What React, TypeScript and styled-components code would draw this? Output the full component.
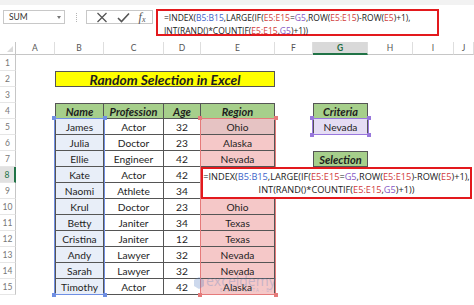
import React from "react";
import styled, { createGlobalStyle } from "styled-components";

const GlobalStyle = createGlobalStyle`
  body {
    margin: 0;
    background: #ffffff;
    font-family: "Lato", "Liberation Sans", sans-serif;
  }
`;

type Row = { name: string; job: string; age: number; region: string };

const rows: Row[] = [
  { name: "James", job: "Actor", age: 32, region: "Ohio" },
  { name: "Julia", job: "Doctor", age: 23, region: "Alaska" },
  { name: "Ellie", job: "Engineer", age: 42, region: "Nevada" },
  { name: "Kate", job: "Actor", age: 42, region: "" },
  { name: "Naomi", job: "Athlete", age: 34, region: "" },
  { name: "Krul", job: "Doctor", age: 23, region: "Ohio" },
  { name: "Betty", job: "Janiter", age: 34, region: "Texas" },
  { name: "Cristina", job: "Janiter", age: 12, region: "Texas" },
  { name: "Andy", job: "Lawyer", age: 32, region: "Nevada" },
  { name: "Sarah", job: "Lawyer", age: 32, region: "Nevada" },
  { name: "Timothy", job: "Actor", age: 42, region: "Alaska" },
];

const letters = ["A", "B", "C", "D", "E", "F", "G", "H", "I", "J"];

const BLUE = "#3d63c9";
const RED = "#d03c3c";
const PURPLE = "#8557c4";

type Tok = [string, string?];
const line1: Tok[] = [
  ["=INDEX("], ["B5:B15", BLUE], [",LARGE(IF("], ["E5:E15", RED], ["="], ["G5", PURPLE],
  [",ROW("], ["E5:E15", RED], [")-ROW("], ["E5", RED], [")+1),"],
];
const line2: Tok[] = [
  ["INT(RAND()*COUNTIF("], ["E5:E15", RED], [","], ["G5", PURPLE], [")+1))"],
];

const Page = styled.div`
  width: 474px;
  height: 305px;
  overflow: hidden;
  display: flex;
  flex-direction: column;
  position: relative;
`;

/* ---------- formula bar ---------- */

const FormulaBar = styled.div`
  display: flex;
  align-items: flex-start;
  border-top: 5px solid #f2f2f2;
  padding: 4px 0 0 3px;
  box-sizing: border-box;
  height: 42px;
`;

const NameBox = styled.div`
  width: 62px;
  height: 14px;
  margin-top: 1px;
  border: 1px solid #c8c8c8;
  box-sizing: border-box;
  display: flex;
  align-items: center;
  justify-content: space-between;
  padding: 0 3px 0 5px;
  font-size: 8.5px;
  color: #333;
`;

const Arrow = styled.span`
  width: 0;
  height: 0;
  border-left: 2.5px solid transparent;
  border-right: 2.5px solid transparent;
  border-top: 3px solid #777;
`;

const Dots = styled.div`
  width: 1px;
  height: 9px;
  margin: 4px 8px 0 11px;
  border-left: 1px dotted #b5b5b5;
`;

const FxBox = styled.div`
  width: 67px;
  height: 14px;
  margin-top: 1px;
  border: 1px solid #c8c8c8;
  box-sizing: border-box;
  display: flex;
  align-items: center;
  justify-content: space-around;
  padding: 0 2px 0 4px;
`;

const Fx = styled.span`
  font-family: "Liberation Serif", serif;
  font-style: italic;
  font-size: 12px;
  color: #555;
  line-height: 1;
  sub {
    font-size: 8px;
    vertical-align: -1px;
  }
`;

const FormulaInput = styled.div`
  margin-left: 3px;
  width: 283px;
  height: 27px;
  border: 2px solid #e3191d;
  box-sizing: border-box;
  padding: 1px 0 0 6px;
  font-family: "Open Sans", sans-serif;
  font-size: 8.5px;
  line-height: 12.5px;
  color: #222;
  white-space: nowrap;
`;

/* ---------- sheet ---------- */

const Sheet = styled.div`
  display: grid;
  grid-template-columns: 16px 39px 49px 60px 37px 74px 38px 55px 45px 41px 1fr;
  grid-template-rows: 13px repeat(15, 16px) 1fr;
  flex: 1;
`;

const Corner = styled.div`
  grid-column: 1;
  grid-row: 1;
  border-right: 1px solid #c6c6c6;
  border-bottom: 1px solid #c6c6c6;
  position: relative;
  &::after {
    content: "";
    position: absolute;
    right: 2px;
    bottom: 2px;
    border-left: 6px solid transparent;
    border-bottom: 6px solid #dadada;
  }
`;

const ColHead = styled.div<{ $col: number; $active?: boolean }>`
  grid-column: ${(p) => p.$col};
  grid-row: 1;
  display: flex;
  align-items: center;
  justify-content: center;
  font-size: 8.5px;
  color: ${(p) => (p.$active ? "#1f6b3f" : "#555")};
  font-weight: ${(p) => (p.$active ? 700 : 400)};
  background: ${(p) => (p.$active ? "#d9d9d9" : "#ffffff")};
  border-right: 1px solid #dedede;
  border-bottom: ${(p) => (p.$active ? "2px solid #217346" : "1px solid #c6c6c6")};
  box-sizing: border-box;
`;

const RowHead = styled.div<{ $row: number; $active?: boolean }>`
  grid-column: 1;
  grid-row: ${(p) => p.$row};
  display: flex;
  align-items: center;
  justify-content: center;
  font-size: 8.5px;
  color: ${(p) => (p.$active ? "#217346" : "#777")};
  background: ${(p) => (p.$active ? "#e1e1e1" : "#ffffff")};
  border-right: ${(p) => (p.$active ? "2px solid #217346" : "1px solid #c6c6c6")};
  border-bottom: 1px solid #e6e6e6;
  box-sizing: border-box;
`;

type Kind = "head" | "name" | "plain" | "region" | "crit" | "title";

const fills: Record<Kind, string> = {
  head: "#a6cf8b",
  name: "#e8eef8",
  plain: "#ffffff",
  region: "#f5c8c8",
  crit: "#e5ddf4",
  title: "#ffff00",
};

const Cell = styled.div<{
  $col: number;
  $row: number;
  $kind: Kind;
  $span?: number;
  $left?: boolean;
  $top?: boolean;
  $shade?: string;
}>`
  grid-column: ${(p) => p.$col} / span ${(p) => p.$span ?? 1};
  grid-row: ${(p) => p.$row};
  display: flex;
  align-items: center;
  justify-content: center;
  box-sizing: border-box;
  background: ${(p) => p.$shade ?? fills[p.$kind]};
  border-right: 1px solid #555;
  border-bottom: 1px solid #555;
  border-left: ${(p) => (p.$left ? "1px solid #555" : "none")};
  border-top: ${(p) => (p.$top ? "1px solid #555" : "none")};
  font-size: ${(p) => (p.$kind === "title" ? "13.8px" : p.$kind === "head" ? "11px" : "10.2px")};
  font-weight: ${(p) => (p.$kind === "head" || p.$kind === "title" ? 700 : 400)};
  font-style: ${(p) => (p.$kind === "head" || p.$kind === "title" ? "italic" : "normal")};
  color: #1e1e1e;
  white-space: nowrap;
`;

const Outline = styled.div<{ $col: number; $rows: string; $color: string }>`
  grid-column: ${(p) => p.$col};
  grid-row: ${(p) => p.$rows};
  border: 1px solid ${(p) => p.$color};
  margin: -1px -1px 0 -1px;
  position: relative;
  z-index: 2;
  pointer-events: none;
`;

const Handle = styled.span<{ $color: string; $x: "l" | "r"; $y: "t" | "b" }>`
  position: absolute;
  width: 4px;
  height: 4px;
  background: ${(p) => p.$color};
  ${(p) => (p.$x === "l" ? "left: -3px;" : "right: -3px;")}
  ${(p) => (p.$y === "t" ? "top: -3px;" : "bottom: -3px;")}
`;

const Editor = styled.div`
  grid-column: 6 / 12;
  grid-row: 9 / 11;
  margin-right: 2px;
  border: 2px solid #e3191d;
  background: #ffffff;
  z-index: 3;
  box-sizing: border-box;
  display: flex;
  flex-direction: column;
  justify-content: center;
  align-items: center;
  font-family: "Open Sans", sans-serif;
  font-size: 9.2px;
  line-height: 13px;
  color: #222;
  white-space: nowrap;
`;

const Ref = styled.span<{ $color?: string }>`
  color: ${(p) => p.$color ?? "inherit"};
`;

const Watermark = styled.div`
  position: absolute;
  left: 194px;
  top: 274px;
  display: flex;
  align-items: center;
  gap: 2px;
  opacity: 0.3;
  pointer-events: none;
  z-index: 4;
`;

const WmText = styled.div`
  display: flex;
  flex-direction: column;
  line-height: 1;
  color: #5b84c4;
  font-family: "Open Sans", sans-serif;
  font-size: 14px;
  small {
    font-size: 4.5px;
    letter-spacing: 1px;
    margin-left: 14px;
  }
`;

function Formula({ line }: { line: Tok[] }) {
  return (
    <div>
      {line.map(([t, c], i) => (
        <Ref key={i} $color={c}>
          {t}
        </Ref>
      ))}
    </div>
  );
}

function Range({ col, rows, color }: { col: number; rows: string; color: string }) {
  return (
    <Outline $col={col} $rows={rows} $color={color}>
      <Handle $color={color} $x="l" $y="t" />
      <Handle $color={color} $x="r" $y="t" />
      <Handle $color={color} $x="l" $y="b" />
      <Handle $color={color} $x="r" $y="b" />
    </Outline>
  );
}

export default function App() {
  return (
    <Page>
      <GlobalStyle />
      <FormulaBar>
        <NameBox>
          SUM
          <Arrow />
        </NameBox>
        <Dots />
        <FxBox>
          <svg width="12" height="11" viewBox="0 0 12 11">
            <path d="M1.5 1 L10.5 10 M10.5 1 L1.5 10" stroke="#555" strokeWidth="1.3" fill="none" />
          </svg>
          <svg width="13" height="11" viewBox="0 0 13 11">
            <path d="M1 6 L4.5 9.5 L12 1.5" stroke="#555" strokeWidth="1.6" fill="none" />
          </svg>
          <Fx>
            f<sub>x</sub>
          </Fx>
        </FxBox>
        <FormulaInput>
          <Formula line={line1} />
          <Formula line={line2} />
        </FormulaInput>
      </FormulaBar>

      <Sheet>
        <Corner />
        {letters.map((l, i) => (
          <ColHead key={l} $col={i + 2} $active={l === "G"}>
            {l}
          </ColHead>
        ))}
        {Array.from({ length: 15 }, (_, i) => (
          <RowHead key={i} $row={i + 2} $active={i + 1 === 8}>
            {i + 1}
          </RowHead>
        ))}

        <Cell $col={3} $row={3} $span={4} $kind="title" $left $top>
          Random Selection in Excel
        </Cell>

        {["Name", "Profession", "Age", "Region"].map((h, i) => (
          <Cell key={h} $col={3 + i} $row={5} $kind="head" $top $left={i === 0}>
            {h}
          </Cell>
        ))}

        {rows.map((r, i) => {
          const row = 6 + i;
          return (
            <React.Fragment key={r.name}>
              <Cell $col={3} $row={row} $kind="name" $left>
                {r.name}
              </Cell>
              <Cell $col={4} $row={row} $kind="plain">
                {r.job}
              </Cell>
              <Cell $col={5} $row={row} $kind="plain">
                {r.age}
              </Cell>
              <Cell $col={6} $row={row} $kind="region" $shade={i === 0 ? "#e6c3c3" : undefined}>
                {r.region}
              </Cell>
            </React.Fragment>
          );
        })}

        <Cell $col={8} $row={5} $kind="head" $left $top>
          Criteria
        </Cell>
        <Cell $col={8} $row={6} $kind="crit" $left>
          Nevada
        </Cell>
        <Cell $col={8} $row={8} $kind="head" $left $top>
          Selection
        </Cell>

        <Range col={3} rows="6 / 17" color="#6f8fe3" />
        <Range col={6} rows="6 / 17" color="#e57a7a" />
        <Range col={8} rows="6 / 7" color="#9877dc" />

        <Editor>
          <Formula line={line1} />
          <Formula line={line2} />
        </Editor>
      </Sheet>

      <Watermark>
        <svg width="10" height="12" viewBox="0 0 10 12">
          <path d="M5 0 L10 3 L10 9 L5 12 L0 9 L0 3 Z" fill="#5b84c4" />
        </svg>
        <WmText>
          exceldemy
          <small>EXCEL · DATA · BI</small>
        </WmText>
      </Watermark>
    </Page>
  );
}
